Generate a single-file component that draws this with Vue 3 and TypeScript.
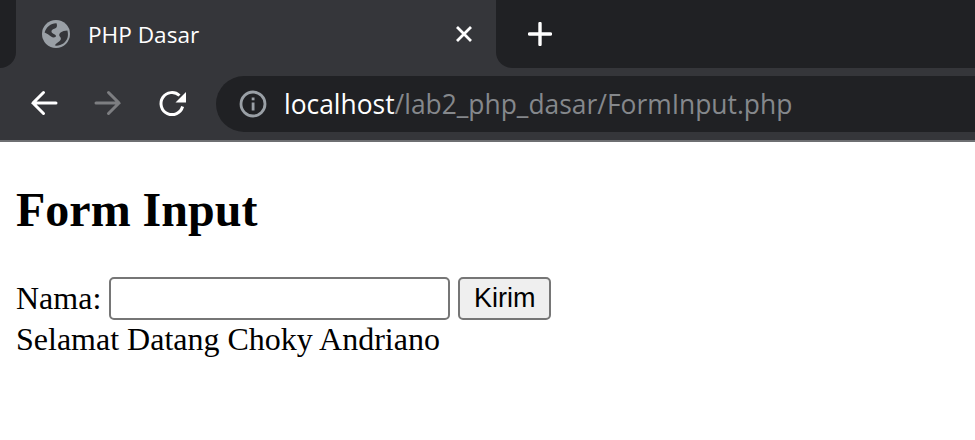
<script setup lang="ts">
const pageTitle = 'PHP Dasar'
const host = 'localhost'
const path = '/lab2_php_dasar/FormInput.php'
const greeting = 'Selamat Datang Choky Andriano'
</script>

<template>
  <div class="window">
    <header class="chrome">
      <div class="tabstrip">
        <div class="edge edge-left"></div>
        <div class="tab">
          <svg class="favicon" viewBox="0 0 28 28">
            <circle cx="14" cy="14" r="14" fill="#9aa0a6" />
            <path d="M14.5 3.2 C9 3 4 7 2.6 12.6 C5 13.6 7 15 9 16.6 C11 18 14 17.6 14 16 C14 14.4 10.5 14 9.5 12 C9 10 11 9 13 8.4 C15 7.8 15.5 5.5 14.5 3.2 Z M25.4 10.4 C22.6 10.6 20.4 11 18.6 12.4 C16.6 14 17 15.6 18.2 17 C19.4 18.4 19 20 17.4 21.2 C15.6 22.4 13.6 23.6 12.8 25.6 C18.6 26.4 24 23 25.6 17.6 C26.2 15 26 12.6 25.4 10.4 Z" fill="#35363a" />
          </svg>
          <span class="tab-title">{{ pageTitle }}</span>
          <svg class="close" viewBox="0 0 16 16">
            <path d="M1 1 L15 15 M15 1 L1 15" stroke="#fff" stroke-width="2.8" fill="none" />
          </svg>
        </div>
        <div class="edge edge-right">
          <svg class="plus" viewBox="0 0 24 24">
            <path d="M12 1.5 V22.5 M1.5 12 H22.5" stroke="#fff" stroke-width="3.4" stroke-linecap="round" fill="none" />
          </svg>
        </div>
      </div>
      <div class="toolbar">
        <svg class="nav" viewBox="0 0 28 28">
          <path d="M26 13 H3 M13.5 2.5 L3 13 L13.5 23.5" stroke="#fff" stroke-width="3" stroke-linecap="round" fill="none" />
        </svg>
        <svg class="nav" viewBox="0 0 28 28">
          <path d="M2 13 H25 M14.5 2.5 L25 13 L14.5 23.5" stroke="#7d7e81" stroke-width="3" stroke-linecap="round" fill="none" />
        </svg>
        <svg class="nav" viewBox="0 0 28 28">
          <path d="M24.6 16.5 A11 11 0 1 1 21.5 5.5" stroke="#fff" stroke-width="3" fill="none" />
          <path d="M28 2 V12.5 H17.5 Z" fill="#fff" />
        </svg>
        <div class="omnibox">
          <svg class="info" viewBox="0 0 28 28">
            <circle cx="14" cy="14" r="12" stroke="#9aa0a6" stroke-width="2.8" fill="none" />
            <rect x="12.7" y="12.5" width="2.8" height="8" fill="#9aa0a6" />
            <rect x="12.7" y="7.5" width="2.8" height="2.8" fill="#9aa0a6" />
          </svg>
          <span class="url"><span class="host">{{ host }}</span><span class="path">{{ path }}</span></span>
        </div>
      </div>
    </header>
    <main class="page">
      <h1>Form Input</h1>
      <form class="form" @submit.prevent>
        Nama: <input type="text" class="field" /> <button type="submit" class="send">Kirim</button>
      </form>
      <div>{{ greeting }}</div>
    </main>
  </div>
</template>

<style scoped>
.window { width: 975px; height: 440px; overflow: hidden; background: #fff; }
.chrome { background: #35363a; border-bottom: 2px solid #6e6f72; }
.tabstrip { display: flex; height: 68px; }
.edge { background: #202124; }
.edge-left { width: 16px; border-bottom-right-radius: 16px; }
.edge-right { flex: 1; border-bottom-left-radius: 16px; display: flex; align-items: center; padding-left: 32px; }
.tab { width: 480px; display: flex; align-items: center; padding: 0 24px 0 26px; box-sizing: border-box; border-radius: 16px 16px 0 0; }
.favicon { width: 28px; height: 28px; }
.tab-title { flex: 1; margin-left: 18px; color: #fff; font: 400 22.6px "Open Sans", sans-serif; }
.close { width: 16px; height: 16px; }
.plus { width: 24px; height: 24px; }
.toolbar { height: 72px; display: flex; align-items: center; padding-left: 30px; gap: 36px; }
.nav { width: 28px; height: 28px; flex: none; }
.omnibox { flex: 1; height: 56px; margin-left: -6px; background: #202124; border-radius: 28px 0 0 28px; display: flex; align-items: center; padding-left: 23px; }
.info { width: 28px; height: 28px; }
.url { margin-left: 17px; font: 400 26.4px "Open Sans", sans-serif; white-space: nowrap; }
.host { color: #fff; }
.path { color: #85888c; }
.page { padding: 0 16px; font: 400 32px/38px "Liberation Serif", serif; color: #000; }
h1 { margin: 40px 0 39px; font: 700 48px/56px "Liberation Serif", serif; }
.form { line-height: 43px; display: block; }
.field { width: 341px; height: 43px; box-sizing: border-box; border: 2px solid #767676; border-radius: 5px; background: #fff; padding: 0; margin: 0; vertical-align: bottom; }
.send { width: 93px; height: 43px; box-sizing: border-box; border: 2px solid #767676; border-radius: 5px; background: #efefef; padding: 0; margin: 0; font: 400 27px "Liberation Sans", sans-serif; color: #000; vertical-align: bottom; }
</style>
